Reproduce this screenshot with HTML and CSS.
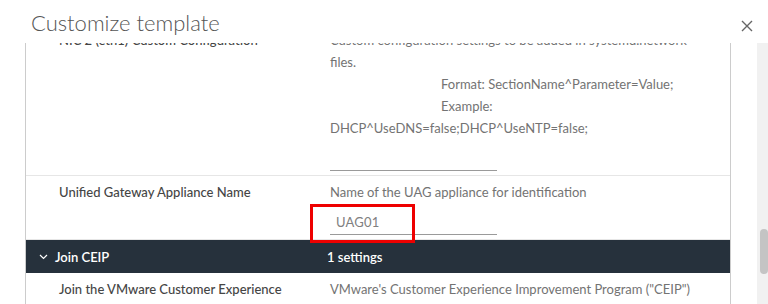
FILE: index.html
```html
<!DOCTYPE html>
<html lang="en">
<head>
    <meta charset="UTF-8">
    <title>Customize template</title>
    <link rel="stylesheet" href="styles.css">
</head>
<body>
    <div class="modal">
        <div class="modal-header">
            <h3 class="modal-title">Customize template</h3>
            <button class="close-btn" aria-label="Close">
                <svg width="12" height="12" viewBox="0 0 12 12"><path d="M1 1L11 11M11 1L1 11" stroke="#666" stroke-width="1.4" fill="none"/></svg>
            </button>
        </div>
        <div class="modal-body">
            <div class="panel">
                <div class="rows">
                    <div class="row">
                        <div class="row-label">NIC 2 (eth1) Custom Configuration</div>
                        <div class="row-value">
                            <p class="desc">Custom configuration settings to be added in systemd.network files.<br><span class="indent">Format: SectionName^Parameter=Value;</span><br><span class="indent">Example:</span><br>DHCP^UseDNS=false;DHCP^UseNTP=false;</p>
                            <div class="input"></div>
                        </div>
                    </div>
                    <div class="row">
                        <div class="row-label">Unified Gateway Appliance Name</div>
                        <div class="row-value">
                            <p class="desc">Name of the UAG appliance for identification</p>
                            <div class="input">UAG01</div>
                            <div class="highlight"></div>
                        </div>
                    </div>
                    <div class="group-header">
                        <div class="group-name">
                            <svg width="9" height="6" viewBox="0 0 9 6"><path d="M1 1L4.5 4.5L8 1" stroke="#fff" stroke-width="1.2" fill="none"/></svg>
                            Join CEIP
                        </div>
                        <div class="group-count">1 settings</div>
                    </div>
                    <div class="row">
                        <div class="row-label">Join the VMware Customer Experience</div>
                        <div class="row-value">
                            <p class="desc">VMware's Customer Experience Improvement Program ("CEIP")</p>
                        </div>
                    </div>
                </div>
            </div>
            <div class="scrollbar">
                <div class="thumb"></div>
            </div>
        </div>
    </div>
</body>
</html>
```
FILE: styles.css
```css
body {
    margin: 0;
    background: #fff;
    font-family: Lato, "Open Sans", sans-serif;
    color: #333;
    overflow: hidden;
}
.modal {
    width: 768px;
    height: 304px;
    display: flex;
    flex-direction: column;
}
.modal-header {
    height: 43px;
    display: flex;
    justify-content: space-between;
    align-items: flex-start;
    padding: 0 15px 0 31px;
    box-sizing: border-box;
}
.modal-title {
    margin: 9px 0 0;
    font-size: 22px;
    font-weight: 300;
    color: #555;
    line-height: 28px;
}
.close-btn {
    margin-top: 20px;
    padding: 0;
    border: none;
    background: none;
    width: 12px;
    height: 12px;
    display: flex;
}
.modal-body {
    flex: 1;
    display: flex;
    min-height: 0;
}
.panel {
    margin-left: 25px;
    width: 706px;
    border-left: 1px solid #ccc;
    border-right: 1px solid #ccc;
    box-sizing: border-box;
    overflow: hidden;
}
.rows {
    margin-top: -19px;
}
.row {
    display: flex;
    padding: 5px 0 4px;
    border-bottom: 1px solid #e6e6e6;
    font-size: 13px;
    line-height: 22px;
}
.row-label {
    width: 271px;
    padding-left: 33px;
    color: #454545;
    font-weight: 500;
}
.row-value {
    position: relative;
    width: 370px;
}
.desc {
    margin: 0;
    color: #737373;
}
.indent {
    padding-left: 111px;
}
.input {
    margin-top: 8px;
    width: 167px;
    height: 24px;
    line-height: 23px;
    border-bottom: 1px solid #9a9a9a;
    padding-left: 6px;
    box-sizing: border-box;
    color: #808080;
    font-size: 13px;
    letter-spacing: 0.2px;
}
.highlight {
    position: absolute;
    left: -20px;
    top: 23px;
    width: 105px;
    height: 39px;
    border: 3px solid #e00;
    box-sizing: border-box;
    z-index: 2;
}
.group-header {
    display: flex;
    height: 33px;
    align-items: center;
    background: #26313c;
    color: #fff;
    font-size: 13px;
    font-weight: 600;
}
.group-name {
    width: 288px;
    padding-left: 13px;
    display: flex;
    align-items: center;
    gap: 7px;
}
.scrollbar {
    margin-left: 26px;
    width: 11px;
    background: #f1f1f1;
    display: flex;
    flex-direction: column;
    padding-top: 186px;
    box-sizing: border-box;
}
.thumb {
    margin-left: 3px;
    width: 8px;
    height: 45px;
    background: #c4c4c4;
    border-radius: 4px;
}
```
